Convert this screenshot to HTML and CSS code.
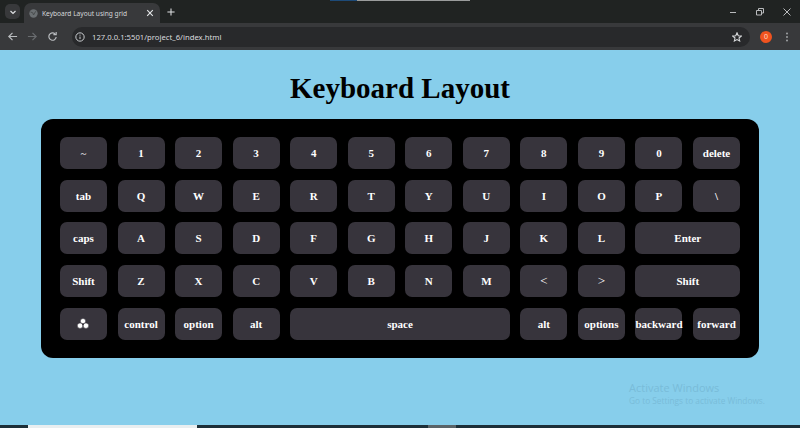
FILE: index.html
```html
<!DOCTYPE html>
<html lang="en">
<head>
<meta charset="utf-8">
<title>Keyboard Layout using grid</title>
<link rel="stylesheet" href="styles.css">
</head>
<body>
<header class="chrome">
  <div class="tabstrip">
    <span class="top-blue"></span>
    <span class="top-grey"></span>
    <span class="tab-search"><svg width="10" height="10" viewBox="0 0 10 10"><path d="M2.500 4l2.500 2.500L7.500 4" fill="none" stroke="#dfe1e3" stroke-width="1.200"/></svg></span>
    <div class="tab">
      <svg class="favicon" width="9" height="9" viewBox="0 0 12 12"><circle cx="6" cy="6" r="5.600" fill="#6b7073"/><path d="M2 4l3 1 1 3 3-5" fill="none" stroke="#45484a" stroke-width="1.200"/></svg>
      <span class="tab-title">Keyboard Layout using grid</span>
      <svg class="tab-close" width="8" height="8" viewBox="0 0 10 10"><path d="M1.500 1.500l7 7M8.500 1.500l-7 7" stroke="#e4e6e8" stroke-width="1.400"/></svg>
    </div>
    <svg class="newtab" width="8" height="8" viewBox="0 0 10 10"><path d="M5 .5v9M.5 5h9" stroke="#dfe1e3" stroke-width="1.300"/></svg>
    <span class="spacer"></span>
    <div class="winctl">
      <svg width="10" height="10" viewBox="0 0 10 10"><path d="M2 5.500h6" stroke="#b9bbbd" stroke-width="1"/></svg>
      <svg width="10" height="10" viewBox="0 0 10 10"><path d="M1.500 3.500h5v4.500h-5zM3.500 3.500v-2h5v4.500h-2" fill="none" stroke="#b9bbbd" stroke-width="1"/></svg>
      <svg width="10" height="10" viewBox="0 0 10 10"><path d="M1.500 1.500l7 7M8.500 1.500l-7 7" stroke="#b9bbbd" stroke-width="1"/></svg>
    </div>
  </div>
  <div class="toolbar">
    <svg class="nav" width="11" height="11" viewBox="0 0 12 12"><path d="M11 6H2M6 2L2 6l4 4" fill="none" stroke="#b9bcbf" stroke-width="1.300"/></svg>
    <svg class="nav" width="11" height="11" viewBox="0 0 12 12"><path d="M1 6h9M6 2l4 4-4 4" fill="none" stroke="#696c6f" stroke-width="1.300"/></svg>
    <svg class="nav" width="11" height="11" viewBox="0 0 12 12"><path d="M10 6.500A4 4 0 1 1 8.800 3.200M10 1v3H7" fill="none" stroke="#b9bcbf" stroke-width="1.300"/></svg>
    <div class="omnibox">
      <svg width="10" height="10" viewBox="0 0 12 12"><circle cx="6" cy="6" r="5" fill="none" stroke="#c9cccf" stroke-width="1.200"/><path d="M6 5.500v3M6 3.200v1.200" stroke="#c9cccf" stroke-width="1.200"/></svg>
      <span class="url">127.0.0.1:5501/project_6/index.html</span>
      <span class="spacer"></span>
      <svg width="10" height="10" viewBox="0 0 12 12"><path d="M6 1l1.500 3.400 3.700.4-2.800 2.400.8 3.600L6 9l-3.200 1.800.8-3.600L.8 4.800l3.700-.4z" fill="none" stroke="#d6d8da" stroke-width="1.300"/></svg>
    </div>
    <span class="avatar">0</span>
    <svg class="menu" width="4" height="10" viewBox="0 0 4 10"><circle cx="2" cy="1.500" r=".9" fill="#a9acae"/><circle cx="2" cy="5" r=".9" fill="#a9acae"/><circle cx="2" cy="8.500" r=".9" fill="#a9acae"/></svg>
  </div>
</header>
<main class="page">
  <h1 class="title">Keyboard Layout</h1>
  <section class="keyboard">
    <button class="key thin">~</button><button class="key">1</button><button class="key">2</button><button class="key">3</button><button class="key">4</button><button class="key">5</button><button class="key">6</button><button class="key">7</button><button class="key">8</button><button class="key">9</button><button class="key">0</button><button class="key">delete</button>
    <button class="key">tab</button><button class="key">Q</button><button class="key">W</button><button class="key">E</button><button class="key">R</button><button class="key">T</button><button class="key">Y</button><button class="key">U</button><button class="key">I</button><button class="key">O</button><button class="key">P</button><button class="key">\</button>
    <button class="key">caps</button><button class="key">A</button><button class="key">S</button><button class="key">D</button><button class="key">F</button><button class="key">G</button><button class="key">H</button><button class="key">J</button><button class="key">K</button><button class="key">L</button><button class="key wide">Enter</button>
    <button class="key">Shift</button><button class="key">Z</button><button class="key">X</button><button class="key">C</button><button class="key">V</button><button class="key">B</button><button class="key">N</button><button class="key">M</button><button class="key symbol">&lt;</button><button class="key symbol">&gt;</button><button class="key wide">Shift</button>
    <button class="key"><svg width="12" height="11" viewBox="0 0 13 12"><circle cx="6.500" cy="3.400" r="2.900" fill="#fff" stroke="#37343c" stroke-width=".6"/><circle cx="3.300" cy="8.400" r="3" fill="#fff" stroke="#37343c" stroke-width=".6"/><circle cx="9.700" cy="8.400" r="3" fill="#fff" stroke="#37343c" stroke-width=".6"/><circle cx="6.500" cy="7" r="1" fill="#37343c"/></svg></button><button class="key">control</button><button class="key">option</button><button class="key">alt</button><button class="key space">space</button><button class="key">alt</button><button class="key">options</button><button class="key">backward</button><button class="key">forward</button>
  </section>
  <aside class="watermark">
    <span class="wm-title">Activate Windows</span>
    <span class="wm-sub">Go to Settings to activate Windows.</span>
  </aside>
</main>
<footer class="taskbar">
  <span class="task-active"></span>
  <span class="task-hover"></span>
</footer>
</body>
</html>
```
FILE: styles.css
```css
* { box-sizing: border-box; }
html, body { margin: 0; height: 100%; }
body {
  width: 800px;
  height: 428px;
  display: flex;
  flex-direction: column;
  overflow: hidden;
  background: #87ceeb;
  font-family: "Liberation Serif", "Times New Roman", serif;
}
.chrome {
  flex: none;
  height: 50px;
  background: #38393b;
  font-family: "Noto Sans", "Open Sans", sans-serif;
}
.tabstrip {
  position: relative;
  height: 23px;
  background: #202322;
  display: flex;
  align-items: center;
  padding-left: 5px;
}
.top-blue {
  position: absolute;
  left: 330px;
  width: 27px;
  top: 0;
  height: 1px;
  background: #1d4a78;
}
.top-grey {
  position: absolute;
  left: 357px;
  width: 113px;
  top: 0;
  height: 1px;
  background: #9a9c9c;
}
.tab-search {
  width: 15px;
  height: 15px;
  border-radius: 5px;
  background: #38393b;
  display: flex;
  align-items: center;
  justify-content: center;
}
.tab {
  margin-left: 4px;
  align-self: flex-end;
  width: 136px;
  height: 20px;
  border-radius: 7px 7px 0 0;
  background: #38393b;
  display: flex;
  align-items: center;
  padding: 0 6px 0 5px;
  gap: 4px;
}
.tab-title {
  flex: 1;
  color: #d6d8da;
  font-size: 6.600px;
  white-space: nowrap;
}
.newtab { margin-left: 7px; }
.spacer { flex: 1; }
.winctl {
  display: flex;
  gap: 17px;
  padding-right: 8px;
  align-items: center;
}
.toolbar {
  height: 27px;
  display: flex;
  align-items: center;
  padding: 0 0 0 7px;
}
.nav { margin-right: 9px; }
.omnibox {
  margin-left: 5px;
  width: 678px;
  height: 20px;
  border-radius: 10px;
  background: #28292b;
  display: flex;
  align-items: center;
  padding: 0 8px 0 3px;
  gap: 7px;
}
.url {
  color: #d8dadd;
  font-size: 7.700px;
}
.avatar {
  margin-left: 10px;
  width: 12px;
  height: 12px;
  border-radius: 50%;
  background: #f0531f;
  color: #ffd9c8;
  font-size: 7px;
  line-height: 12px;
  text-align: center;
}
.menu { margin-left: 13px; }
.page {
  flex: 1;
  position: relative;
  display: flex;
  flex-direction: column;
  align-items: center;
  min-height: 0;
}
.title {
  margin: 20px 0 12px;
  font-size: 29px;
  line-height: 37px;
  font-weight: 700;
  color: #000;
}
.keyboard {
  width: 718px;
  height: 239px;
  padding: 18px 19px;
  border-radius: 12px;
  background: #000;
  display: grid;
  grid-template-columns: repeat(12, 1fr);
  grid-auto-rows: 32px;
  gap: 10.700px 10.600px;
}
.key {
  border: 0;
  padding: 0;
  min-width: 0;
  border-radius: 7px;
  background: #37343c;
  color: #fff;
  font: 700 11px "Liberation Serif", "Times New Roman", serif;
  display: flex;
  align-items: center;
  justify-content: center;
  white-space: nowrap;
}
.thin { font-weight: 400; }
.symbol { font-weight: 400; font-size: 13px; }
.wide { grid-column: span 2; }
.space { grid-column: span 4; }
.watermark {
  position: absolute;
  left: 629px;
  top: 330px;
  display: flex;
  flex-direction: column;
  font-family: "Open Sans", "Noto Sans", sans-serif;
  color: #79bcd9;
}
.wm-title { font-size: 11px; line-height: 15px; }
.wm-sub { font-size: 8.300px; line-height: 12px; white-space: nowrap; }
.taskbar {
  flex: none;
  height: 3px;
  background: #1d2f38;
  position: relative;
}
.task-active {
  position: absolute;
  left: 28px;
  width: 169px;
  top: 0;
  bottom: 0;
  background: #e8eef0;
}
.task-hover {
  position: absolute;
  left: 428px;
  width: 28px;
  top: 0;
  bottom: 0;
  background: #5a6468;
}
```
